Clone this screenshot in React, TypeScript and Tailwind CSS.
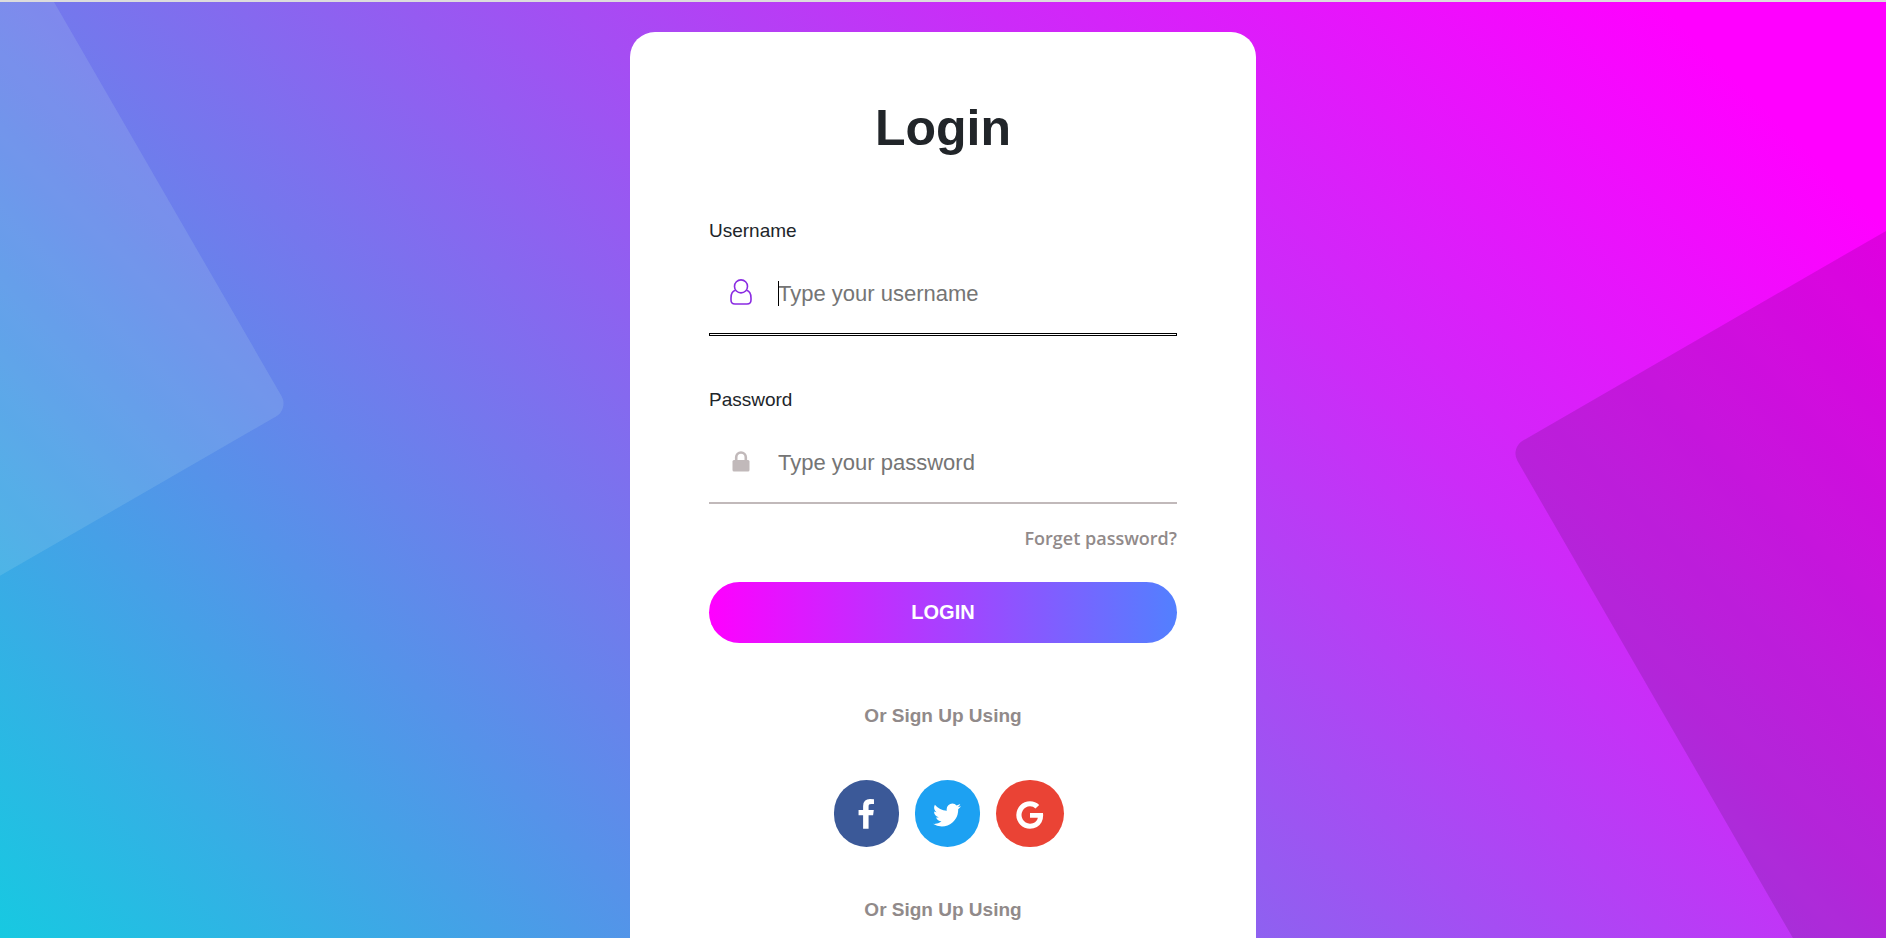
const socials = [
  {
    name: "Facebook",
    style: "w-[65px] bg-[#3b5998]",
    viewBox: "-384 0 1792 1792",
    path: "M959 12v264h-157q-86 0-116 36t-30 108v189h293l-39 296h-254v759h-306v-759h-255v-296h255v-218q0-186 104-288.5t277-102.5q147 0 228 12z",
  },
  {
    name: "Twitter",
    style: "w-[65px] bg-[#1da1f2]",
    viewBox: "0 0 1792 1792",
    path: "M1684 408q-67 98-162 167 1 14 1 42 0 130-38 259.5t-115.5 248.5-184.5 210.5-258 146-323 54.5q-271 0-496-145 35 4 78 4 225 0 401-138-105-2-188-64.5t-114-159.5q33 5 61 5 43 0 85-11-112-23-185.5-111.5t-73.5-205.5v-4q68 38 146 41-66-44-105-115t-39-154q0-88 44-163 121 149 294.5 238.5t371.5 99.5q-8-38-8-74 0-134 94.5-228.5t228.5-94.5q140 0 236 102 109-21 205-78-37 115-142 178 93-10 186-50z",
  },
  {
    name: "Google",
    style: "w-[68px] bg-[#ea4335]",
    viewBox: "0 0 1792 1792",
    path: "M896 786h725q12 67 12 128 0 217-91 387.5t-259.5 266.5-386.5 96q-157 0-299-60.5t-245-163.5-163.5-245-60.5-299 60.5-299 163.5-245 245-163.5 299-60.5q300 0 515 201l-209 201q-123-119-306-119-129 0-238.5 65t-173.5 176.5-64 243.5 64 243.5 173.5 176.5 238.5 65q87 0 160-24t120-60 82-82 51.5-87 22.5-78h-436v-264z",
  },
];

function UserIcon() {
  return (
    <svg width="22" height="26" viewBox="0 0 22 26" fill="none" stroke="#8a2be2" strokeWidth="1.6">
      <circle cx="11" cy="7.4" r="6.5" />
      <path d="M5.6 11.3C2.6 12 1 15 1 19V21C1 23.6 2.4 25 5 25H17C19.6 25 21 23.6 21 21V19C21 15 19.4 12 16.4 11.3" />
    </svg>
  );
}

function LockIcon() {
  return (
    <svg width="18" height="21" viewBox="0 0 18 21" fill="none">
      <path d="M4.2 10V6.3a4.8 4.8 0 0 1 9.6 0V10" stroke="#c1b9ba" strokeWidth="2.6" />
      <rect x="0.5" y="9" width="17" height="11.5" rx="1.5" fill="#c1b9ba" />
    </svg>
  );
}

export default function App() {
  return (
    <main className="relative flex min-h-screen flex-col items-center overflow-hidden border-t-2 border-[#dcdcdc] bg-[linear-gradient(45deg,#17c9e1_0%,#cc2bf8_68%,#ff00ff_92%)] pt-[30px] font-['Liberation_Sans',Arial,sans-serif]">
      <div className="absolute -top-[293px] -left-[411px] size-[700px] origin-bottom-right -rotate-30 rounded-[15px] bg-[#cdf0ee]/14" />
      <div className="absolute top-[446px] -right-[324px] size-[700px] origin-top-left -rotate-30 rounded-[15px] bg-black/12" />

      <form className="relative flex w-full max-w-[626px] flex-1 flex-col rounded-t-[25px] bg-white px-[79px] pt-[66px]">
        <h1 className="text-center text-[50px] leading-[60px] font-bold text-[#212529]">Login</h1>

        <div className="mt-[59px]">
          <label htmlFor="username" className="block text-[19px] leading-[28px] text-[#212529]">
            Username
          </label>
          <div className="relative mt-[11px] flex h-[77px] items-center pb-[2px]">
            <span className="mr-[5px] flex w-[64px] justify-center pb-[3px]">
              <UserIcon />
            </span>
            <span className="absolute left-[69px] h-[25px] w-px bg-black" />
            <input
              id="username"
              type="text"
              placeholder="Type your username"
              className="h-full min-w-0 flex-1 text-[22px] caret-transparent outline-none placeholder:text-[#757575]"
            />
          </div>
          <div className="h-[3px] border border-black" />
        </div>

        <div className="mt-[50px]">
          <label htmlFor="password" className="block text-[19px] leading-[28px] text-[#212529]">
            Password
          </label>
          <div className="mt-[11px] flex h-[77px] items-center pb-[2px]">
            <span className="mr-[5px] flex w-[64px] justify-center pb-[3px]">
              <LockIcon />
            </span>
            <input
              id="password"
              type="password"
              placeholder="Type your password"
              className="h-full min-w-0 flex-1 text-[22px] outline-none placeholder:text-[#757575]"
            />
          </div>
          <div className="h-[2px] bg-[#c1b9ba]" />
        </div>

        <a
          href="#forgot"
          className="mt-[21px] self-end font-['Open_Sans','Noto_Sans',sans-serif] text-[18px] leading-[26px] font-semibold text-[#918a8a]"
        >
          Forget password?
        </a>

        <button
          type="submit"
          className="mt-[31px] h-[61px] rounded-full bg-[linear-gradient(to_right,#ff00ff,#5280ff)] pb-[2px] text-[20px] font-bold text-white"
        >
          LOGIN
        </button>

        <p className="mt-[59px] text-center text-[19px] leading-[28px] font-bold text-[#918a8a]">Or Sign Up Using</p>

        <div className="mt-[50px] flex justify-center gap-[5px]">
          {socials.map((s) => (
            <a
              key={s.name}
              href="#"
              aria-label={s.name}
              className={`ml-[11px] flex h-[67px] items-center justify-center rounded-full pt-[3px] text-white ${s.style}`}
            >
              <svg width="32" height="32" viewBox={s.viewBox} fill="currentColor">
                <path d={s.path} />
              </svg>
            </a>
          ))}
        </div>

        <p className="mt-[49px] text-center text-[19px] leading-[28px] font-bold text-[#918a8a]">Or Sign Up Using</p>
      </form>
    </main>
  );
}
